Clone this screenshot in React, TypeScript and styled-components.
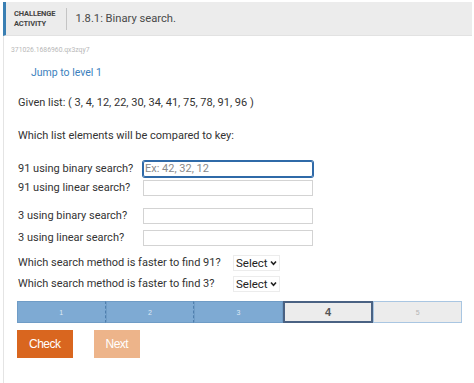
import styled, { createGlobalStyle } from 'styled-components'

const Global = createGlobalStyle`
  html, body {
    margin: 0;
    padding: 0;
    background: #ffffff;
  }
  body {
    font-family: Roboto, "Liberation Sans", sans-serif;
    color: #333333;
  }
`

const Page = styled.div`
  width: 474px;
  height: 383px;
  padding: 2px 2px 0 3px;
  box-sizing: border-box;
  overflow: hidden;
`

const Panel = styled.div`
  border-left: 1px solid #e4e4e4;
  height: 100%;
`

const Header = styled.div`
  display: flex;
  align-items: center;
  height: 33px;
  background: #ececec;
  border-left: 3px solid #3a7fb3;
  border-bottom: 1px solid #e2e2e2;
  margin-left: -1px;
`

const Badge = styled.div`
  font-size: 7.5px;
  font-weight: 700;
  line-height: 10px;
  color: #444;
  padding: 0 11px 0 8px;
  letter-spacing: -0.1px;
`

const Divider = styled.div`
  width: 1px;
  height: 22px;
  background: #c4c4c4;
`

const Title = styled.div`
  font-size: 11.2px;
  color: #4a4a4a;
  padding-left: 8px;
`

const Body = styled.div`
  padding: 0 0 0 14px;
`

const Code = styled.div`
  font-size: 6.8px;
  line-height: 8px;
  color: #b8b8b8;
  margin: 10px 0 0 -7px;
`

const JumpLink = styled.div`
  font-size: 10.5px;
  line-height: 13px;
  color: #3c7fbd;
  margin: 12px 0 0 13px;
`

const Prompt = styled.div<{ $gap: number }>`
  font-size: 11px;
  line-height: 14px;
  margin-top: ${({ $gap }) => $gap}px;
  white-space: nowrap;
`

const Group = styled.div<{ $gap: number; $rowGap: number }>`
  display: grid;
  grid-template-columns: 125px 170px;
  row-gap: ${({ $rowGap }) => $rowGap}px;
  align-items: center;
  margin-top: ${({ $gap }) => $gap}px;
`

const Label = styled.div`
  font-size: 11px;
  line-height: 14px;
  white-space: nowrap;
`

const Field = styled.div<{ $focus?: boolean }>`
  height: 16px;
  box-sizing: border-box;
  border: 1px solid ${({ $focus }) => ($focus ? '#2f6aa8' : '#d3d3d3')};
  border-radius: ${({ $focus }) => ($focus ? '2px' : '0')};
  box-shadow: ${({ $focus }) => ($focus ? '0 0 0 1px #2f6aa8' : 'none')};
  font-size: 11px;
  color: #8a8a8a;
  line-height: 14px;
  padding-left: 1px;
`

const SelectRows = styled.div`
  display: grid;
  grid-template-columns: 215px auto;
  row-gap: 5px;
  align-items: center;
  margin-top: 9px;
  justify-content: start;
`

const SelectBox = styled.div`
  display: flex;
  align-items: center;
  gap: 2px;
  height: 16px;
  box-sizing: border-box;
  border: 1px solid #ececec;
  padding: 0 2px;
  font-size: 11.5px;
  color: #222;
  white-space: nowrap;
`

const ChevronIcon = styled.svg`
  flex-shrink: 0;
`

const Progress = styled.div`
  display: flex;
  margin: 9px 10px 0 -1px;
  height: 22px;
`

const Step = styled.div<{ $state: 'done' | 'current' | 'todo'; $dash?: boolean }>`
  flex: 1;
  display: flex;
  align-items: center;
  justify-content: center;
  box-sizing: border-box;
  font-family: "Liberation Sans", Arial, sans-serif;
  font-size: ${({ $state }) => ($state === 'current' ? '11px' : '7px')};
  font-weight: ${({ $state }) => ($state === 'current' ? 700 : 400)};
  background: ${({ $state }) => ($state === 'done' ? '#7eaad3' : '#ececec')};
  color: ${({ $state }) =>
    $state === 'done' ? '#dde9f5' : $state === 'current' ? '#555' : '#b5b5b5'};
  border: ${({ $state }) =>
    $state === 'current'
      ? '2px solid #4a6283'
      : $state === 'done'
      ? '1px solid #6f9cc6'
      : '1px solid #a9c6e2'};
  border-right: ${({ $dash, $state }) =>
    $dash ? '1px dashed #4f7fae' : $state === 'current' ? '2px solid #4a6283' : undefined};
`

const Buttons = styled.div`
  display: flex;
  gap: 21px;
  margin: 7px 0 0 -1px;
`

const Button = styled.div<{ $faded?: boolean }>`
  height: 28px;
  padding: 0 12px;
  display: flex;
  align-items: center;
  font-family: "Liberation Sans", Arial, sans-serif;
  font-size: 12px;
  letter-spacing: -0.5px;
  color: #fff;
  background: ${({ $faded }) => ($faded ? '#edb48a' : '#d9661f')};
`

const Chevron = () => (
  <ChevronIcon width="7" height="6" viewBox="0 0 7 6">
    <path d="M1 1.5 L3.5 4.3 L6 1.5" fill="none" stroke="#222" strokeWidth="1.6" />
  </ChevronIcon>
)

const App = () => {
  const rows1 = ['91 using binary search?', '91 using linear search?']
  const rows2 = ['3 using binary search?', '3 using linear search?']
  return (
    <Page>
      <Global />
      <Panel>
        <Header>
          <Badge>
            CHALLENGE
            <br />
            ACTIVITY
          </Badge>
          <Divider />
          <Title>1.8.1: Binary search.</Title>
        </Header>
        <Body>
          <Code>371026.1686960.qx3zqy7</Code>
          <JumpLink>Jump to level 1</JumpLink>
          <Prompt $gap={17}>Given list: ( 3, 4, 12, 22, 30, 34, 41, 75, 78, 91, 96 )</Prompt>
          <Prompt $gap={19}>Which list elements will be compared to key:</Prompt>
          <Group $gap={18} $rowGap={3}>
            {rows1.map((r, i) => [
              <Label key={r}>{r}</Label>,
              <Field key={r + 'f'} $focus={i === 0}>
                {i === 0 ? 'Ex: 42, 32, 12' : ''}
              </Field>,
            ])}
          </Group>
          <Group $gap={12} $rowGap={6}>
            {rows2.map((r) => [<Label key={r}>{r}</Label>, <Field key={r + 'f'} />])}
          </Group>
          <SelectRows>
            <Label>Which search method is faster to find 91?</Label>
            <SelectBox>
              Select <Chevron />
            </SelectBox>
            <Label>Which search method is faster to find 3?</Label>
            <SelectBox>
              Select <Chevron />
            </SelectBox>
          </SelectRows>
          <Progress>
            <Step $state="done" $dash>1</Step>
            <Step $state="done" $dash>2</Step>
            <Step $state="done">3</Step>
            <Step $state="current">4</Step>
            <Step $state="todo">5</Step>
          </Progress>
          <Buttons>
            <Button>Check</Button>
            <Button $faded>Next</Button>
          </Buttons>
        </Body>
      </Panel>
    </Page>
  )
}

export default App
